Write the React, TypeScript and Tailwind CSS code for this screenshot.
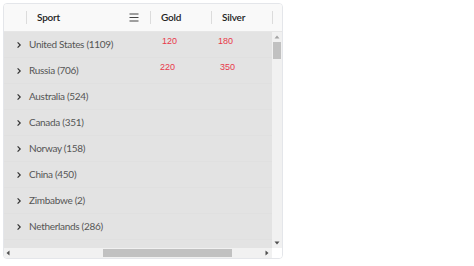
import React from "react";

type Country = { name: string; count: number; gold?: string; silver?: string };

const rows: Country[] = [
  { name: "United States", count: 1109, gold: "120", silver: "180" },
  { name: "Russia", count: 706, gold: "220", silver: "350" },
  { name: "Australia", count: 524 },
  { name: "Canada", count: 351 },
  { name: "Norway", count: 158 },
  { name: "China", count: 450 },
  { name: "Zimbabwe", count: 2 },
  { name: "Netherlands", count: 286 },
];

function Chevron() {
  return (
    <svg width="8" height="8" viewBox="0 0 8 8" className="shrink-0">
      <path d="M2.6 1.4 L5.2 4 L2.6 6.6" fill="none" stroke="#333" strokeWidth="1.2" />
    </svg>
  );
}

function Separator() {
  return <div className="h-[13px] w-px bg-[#dcdcdc]" />;
}

function HeaderCell({ label, width, menu }: { label: string; width: string; menu?: boolean }) {
  return (
    <div className={`flex items-center h-full ${width}`}>
      <Separator />
      <span className="pl-[10px] font-semibold text-[#222] flex-1 tracking-[-0.2px]">{label}</span>
      {menu && (
        <svg width="10" height="9" viewBox="0 0 10 9" className="mr-[11px]">
          <path d="M0.5 1 H9.5 M0.5 4.5 H9.5 M0.5 8 H9.5" stroke="#444" strokeWidth="1.1" />
        </svg>
      )}
    </div>
  );
}

export default function App() {
  return (
    <div className="p-[3px] bg-white" style={{ fontFamily: "Lato, 'Noto Sans', sans-serif" }}>
      <div className="w-[280px] h-[256px] border border-[#e4e6ea] rounded-[4px] overflow-hidden flex flex-col bg-white text-[10px]">
        {/* HEADER */}
        <div className="h-[28px] flex items-center bg-[#f9f9f9] border-b border-[#e6e6e6] shrink-0">
          <div className="w-[22px]" />
          <HeaderCell label="Sport" width="w-[124px]" menu />
          <HeaderCell label="Gold" width="w-[61px]" />
          <HeaderCell label="Silver" width="w-[61px]" />
          <Separator />
        </div>

        {/* BODY */}
        <div className="flex flex-1 min-h-0">
          <div className="flex-1 bg-[#e3e3e3] overflow-hidden">
            {rows.map((r, i) => (
              <div key={r.name} className="h-[26px] flex border-b border-[#e0e0e0] shrink-0">
                <div className="w-[146px] flex items-center pl-[11px] gap-[6px] text-[#555] tracking-[-0.3px]">
                  <Chevron />
                  <span>
                    {r.name} ({r.count})
                  </span>
                </div>
                <div
                  className={`w-[61px] pt-[3px] text-[9px] text-[#e8394b] ${i === 0 ? "pl-[12px]" : "pl-[10px]"}`}
                  style={{ fontFamily: "'Liberation Sans', Arial, sans-serif" }}
                >
                  {r.gold}
                </div>
                <div
                  className={`w-[61px] pt-[3px] text-[9px] text-[#e8394b] ${i === 0 ? "pl-[7px]" : "pl-[9px]"}`}
                  style={{ fontFamily: "'Liberation Sans', Arial, sans-serif" }}
                >
                  {r.silver}
                </div>
              </div>
            ))}
          </div>
          {/* VERTICAL SCROLLBAR */}
          <div className="w-[10px] bg-[#f1f1f1] flex flex-col items-center">
            <svg width="6" height="6" viewBox="0 0 6 6" className="mt-[2px]">
              <path d="M0.5 4.5 L3 1.5 L5.5 4.5 Z" fill="#a3a3a3" />
            </svg>
            <div className="mt-[2px] w-[8px] h-[17px] bg-[#c1c1c1]" />
            <div className="flex-1" />
            <svg width="6" height="6" viewBox="0 0 6 6" className="mb-[2px]">
              <path d="M0.5 1.5 L3 4.5 L5.5 1.5 Z" fill="#505050" />
            </svg>
          </div>
        </div>

        {/* HORIZONTAL SCROLLBAR */}
        <div className="h-[10px] flex shrink-0">
          <div className="flex-1 bg-[#f1f1f1] flex items-center">
            <svg width="6" height="6" viewBox="0 0 6 6" className="ml-[1px]">
              <path d="M4.5 0.5 L1.5 3 L4.5 5.5 Z" fill="#505050" />
            </svg>
            <div className="ml-[92px] w-[129px] h-[8px] bg-[#c1c1c1]" />
            <div className="flex-1" />
            <svg width="6" height="6" viewBox="0 0 6 6" className="mr-[2px]">
              <path d="M1.5 0.5 L4.5 3 L1.5 5.5 Z" fill="#505050" />
            </svg>
          </div>
          <div className="w-[10px] bg-white" />
        </div>
      </div>
    </div>
  );
}
